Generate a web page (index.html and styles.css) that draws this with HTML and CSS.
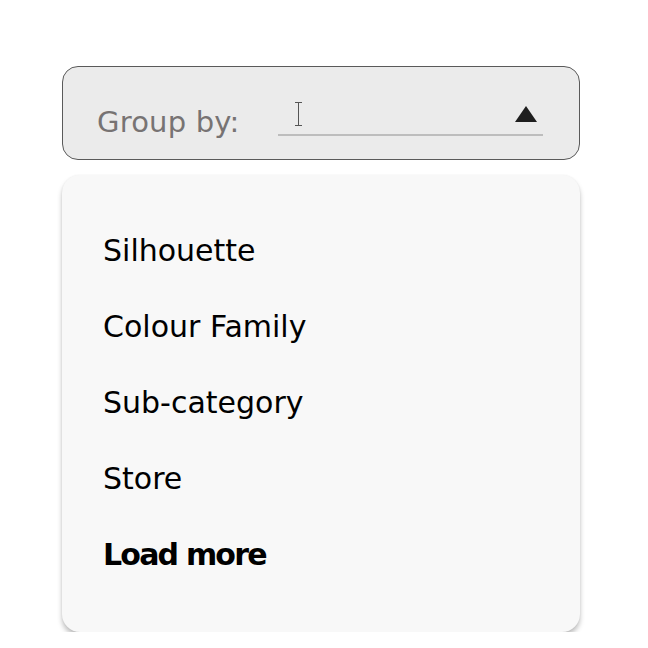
FILE: index.html
```html
<!DOCTYPE html>
<html lang="en">
  <head>
    <meta charset="UTF-8" />
    <meta name="viewport" content="width=device-width, initial-scale=1.0" />
    <title>Group by</title>
    <link rel="stylesheet" href="styles.css">
  </head>
  <body>
    <div class="wrapper">
      <div class="select-box">
        <label for="groupBy">Group by:</label>
        <div class="field">
          <span class="caret"></span>
          <span class="arrow"></span>
        </div>
      </div>

      <ul class="dropdown">
        <li>Silhouette</li>
        <li>Colour Family</li>
        <li>Sub-category</li>
        <li>Store</li>
        <li class="load-more">Load more</li>
      </ul>
    </div>
  </body>
</html>
```

FILE: styles.css
```css
body {
  font-family: "DejaVu Sans", sans-serif;
  background-color: #ffffff;
  margin: 0;
  padding: 0;
}

.wrapper {
  width: 518px;
  padding: 66px 0 0 62px;
}

.select-box {
  height: 92px;
  display: flex;
  align-items: center;
  padding: 0 36px 0 34px;
  background-color: #ebebeb;
  border: 1px solid #5a5a5a;
  border-radius: 16px;
}

.select-box label {
  font-size: 29px;
  line-height: 34px;
  color: #777373;
  width: 181px;
  padding-top: 17px;
  letter-spacing: 0.2px;
}

.field {
  flex: 1;
  height: 32px;
  margin-top: 8px;
  padding: 4px 6px 0 20px;
  border-bottom: 2px solid #bdbdbd;
  display: flex;
  align-items: flex-start;
  justify-content: space-between;
}

/* text cursor */
.caret {
  width: 1px;
  height: 24px;
  background-color: #555;
  position: relative;
}

.caret::before,
.caret::after {
  content: "";
  position: absolute;
  left: -3px;
  width: 7px;
  height: 1px;
  background-color: #555;
}

.caret::before {
  top: 0;
}

.caret::after {
  bottom: 0;
}

.arrow {
  margin-top: 4px;
  width: 0;
  height: 0;
  border-left: 11px solid transparent;
  border-right: 11px solid transparent;
  border-bottom: 16px solid #1e1e1e;
}

.dropdown {
  list-style: none;
  margin: 15px 0 0;
  padding: 38px 0 39px 41px;
  background-color: #f8f8f8;
  border-radius: 18px;
  box-shadow: 0 4px 5px rgba(0, 0, 0, 0.25), 0 0 2px rgba(0, 0, 0, 0.06);
}

.dropdown li {
  font-size: 30px;
  line-height: 76px;
  color: #000;
}

.load-more {
  font-weight: 700;
  letter-spacing: -1.8px;
}
```
